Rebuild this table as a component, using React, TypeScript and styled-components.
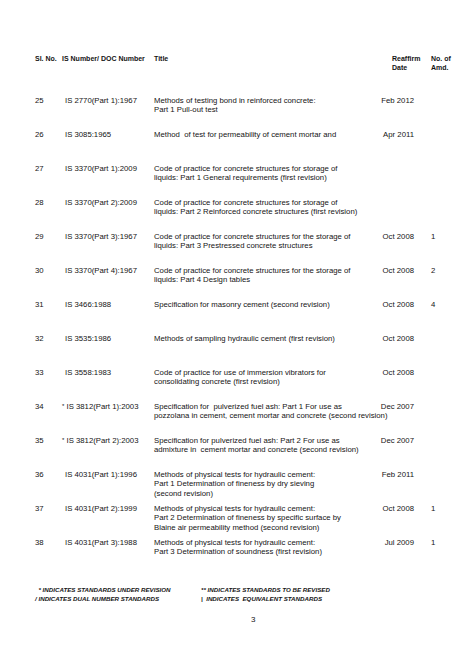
import React from "react";
import styled, { createGlobalStyle } from "styled-components";

const GlobalStyle = createGlobalStyle`
  html, body {
    margin: 0;
    padding: 0;
    background: #ffffff;
  }
  body {
    font-family: "Liberation Sans", Arial, sans-serif;
    color: #141414;
  }
`;

interface Entry {
  no: number;
  code: string;
  star?: boolean;
  title: string[];
  date?: string;
  amd?: string;
}

const entries: Entry[] = [
  { no: 25, code: "IS 2770(Part 1):1967", title: ["Methods of testing bond in reinforced concrete:", "Part 1 Pull-out test"], date: "Feb 2012" },
  { no: 26, code: "IS 3085:1965", title: ["Method  of test for permeability of cement mortar and"], date: "Apr 2011" },
  { no: 27, code: "IS 3370(Part 1):2009", title: ["Code of practice for concrete structures for storage of", "liquids: Part 1 General requirements (first revision)"] },
  { no: 28, code: "IS 3370(Part 2):2009", title: ["Code of practice for concrete structures for storage of", "liquids: Part 2 Reinforced concrete structures (first revision)"] },
  { no: 29, code: "IS 3370(Part 3):1967", title: ["Code of practice for concrete structures for the storage of", "liquids: Part 3 Prestressed concrete structures"], date: "Oct 2008", amd: "1" },
  { no: 30, code: "IS 3370(Part 4):1967", title: ["Code of practice for concrete structures for the storage of", "liquids: Part 4 Design tables"], date: "Oct 2008", amd: "2" },
  { no: 31, code: "IS 3466:1988", title: ["Specification for masonry cement (second revision)"], date: "Oct 2008", amd: "4" },
  { no: 32, code: "IS 3535:1986", title: ["Methods of sampling hydraulic cement (first revision)"], date: "Oct 2008" },
  { no: 33, code: "IS 3558:1983", title: ["Code of practice for use of immersion vibrators for", "consolidating concrete (first revision)"], date: "Oct 2008" },
  { no: 34, code: "IS 3812(Part 1):2003", star: true, title: ["Specification for  pulverized fuel ash: Part 1 For use as", "pozzolana in cement, cement mortar and concrete (second revision)"], date: "Dec 2007" },
  { no: 35, code: "IS 3812(Part 2):2003", star: true, title: ["Specification for pulverized fuel ash: Part 2 For use as", "admixture in  cement mortar and concrete (second revision)"], date: "Dec 2007" },
  { no: 36, code: "IS 4031(Part 1):1996", title: ["Methods of physical tests for hydraulic cement:", "Part 1 Determination of fineness by dry sieving", "(second revision)"], date: "Feb 2011" },
  { no: 37, code: "IS 4031(Part 2):1999", title: ["Methods of physical tests for hydraulic cement:", "Part 2 Determination of fineness by specific surface by", "Blaine air permeability method (second revision)"], date: "Oct 2008", amd: "1" },
  { no: 38, code: "IS 4031(Part 3):1988", title: ["Methods of physical tests for hydraulic cement:", "Part 3 Determination of soundness (first revision)"], date: "Jul 2009", amd: "1" },
];

const Page = styled.div`
  width: 474px;
  height: 670px;
  box-sizing: border-box;
  padding: 54px 0 0 35px;
  overflow: hidden;
`;

const Table = styled.div`
  display: grid;
  grid-template-columns: 27px 92px 216px 44px 17px 40px;
`;

const Row = styled.div<{ $height: number }>`
  display: contents;
  & > * {
    height: ${(p) => p.$height}px;
  }
`;

const HeadCell = styled.div<{ $indent?: number }>`
  font-size: 7px;
  font-weight: 700;
  line-height: 9px;
  white-space: nowrap;
  padding-left: ${(p) => p.$indent ?? 0}px;
`;

const Cell = styled.div<{ $indent?: number; $right?: boolean }>`
  font-size: 7.75px;
  line-height: 9.3px;
  white-space: pre;
  padding-left: ${(p) => p.$indent ?? 0}px;
  text-align: ${(p) => (p.$right ? "right" : "left")};
`;

const Star = styled.span`
  font-size: 6px;
  position: relative;
  top: -1px;
`;

const Notes = styled.div`
  margin-top: 13px;
  display: grid;
  grid-template-columns: 166px auto;
  font-size: 6.2px;
  line-height: 9px;
  font-weight: 700;
  font-style: italic;
  white-space: pre;
`;

const PageNo = styled.div`
  margin-top: 12px;
  padding-left: 216px;
  font-size: 8px;
  line-height: 9px;
`;

export default function App() {
  return (
    <>
      <GlobalStyle />
      <Page>
        <Table>
          <Row $height={42}>
            <HeadCell>Sl. No.</HeadCell>
            <HeadCell>IS Number/ DOC Number</HeadCell>
            <HeadCell>Title</HeadCell>
            <HeadCell $indent={22}>
              Reaffirm
              <br />
              Date
            </HeadCell>
            <HeadCell />
            <HeadCell>
              No. of
              <br />
              Amd.
            </HeadCell>
          </Row>
          {entries.map((e) => (
            <Row $height={34} key={e.no}>
              <Cell>{e.no}</Cell>
              <Cell $indent={e.star ? 0 : 3}>
                {e.star && <Star>*</Star>}
                {e.star ? " " : ""}
                {e.code}
              </Cell>
              <Cell>{e.title.join("\n")}</Cell>
              <Cell $right>{e.date ?? ""}</Cell>
              <Cell />
              <Cell>{e.amd ?? ""}</Cell>
            </Row>
          ))}
        </Table>
        <Notes>
          <div>{"  * INDICATES STANDARDS UNDER REVISION"}</div>
          <div>{"** INDICATES STANDARDS TO BE REVISED"}</div>
          <div>{"/ INDICATES DUAL NUMBER STANDARDS"}</div>
          <div>{"|  INDICATES  EQUIVALENT STANDARDS"}</div>
        </Notes>
        <PageNo>3</PageNo>
      </Page>
    </>
  );
}
